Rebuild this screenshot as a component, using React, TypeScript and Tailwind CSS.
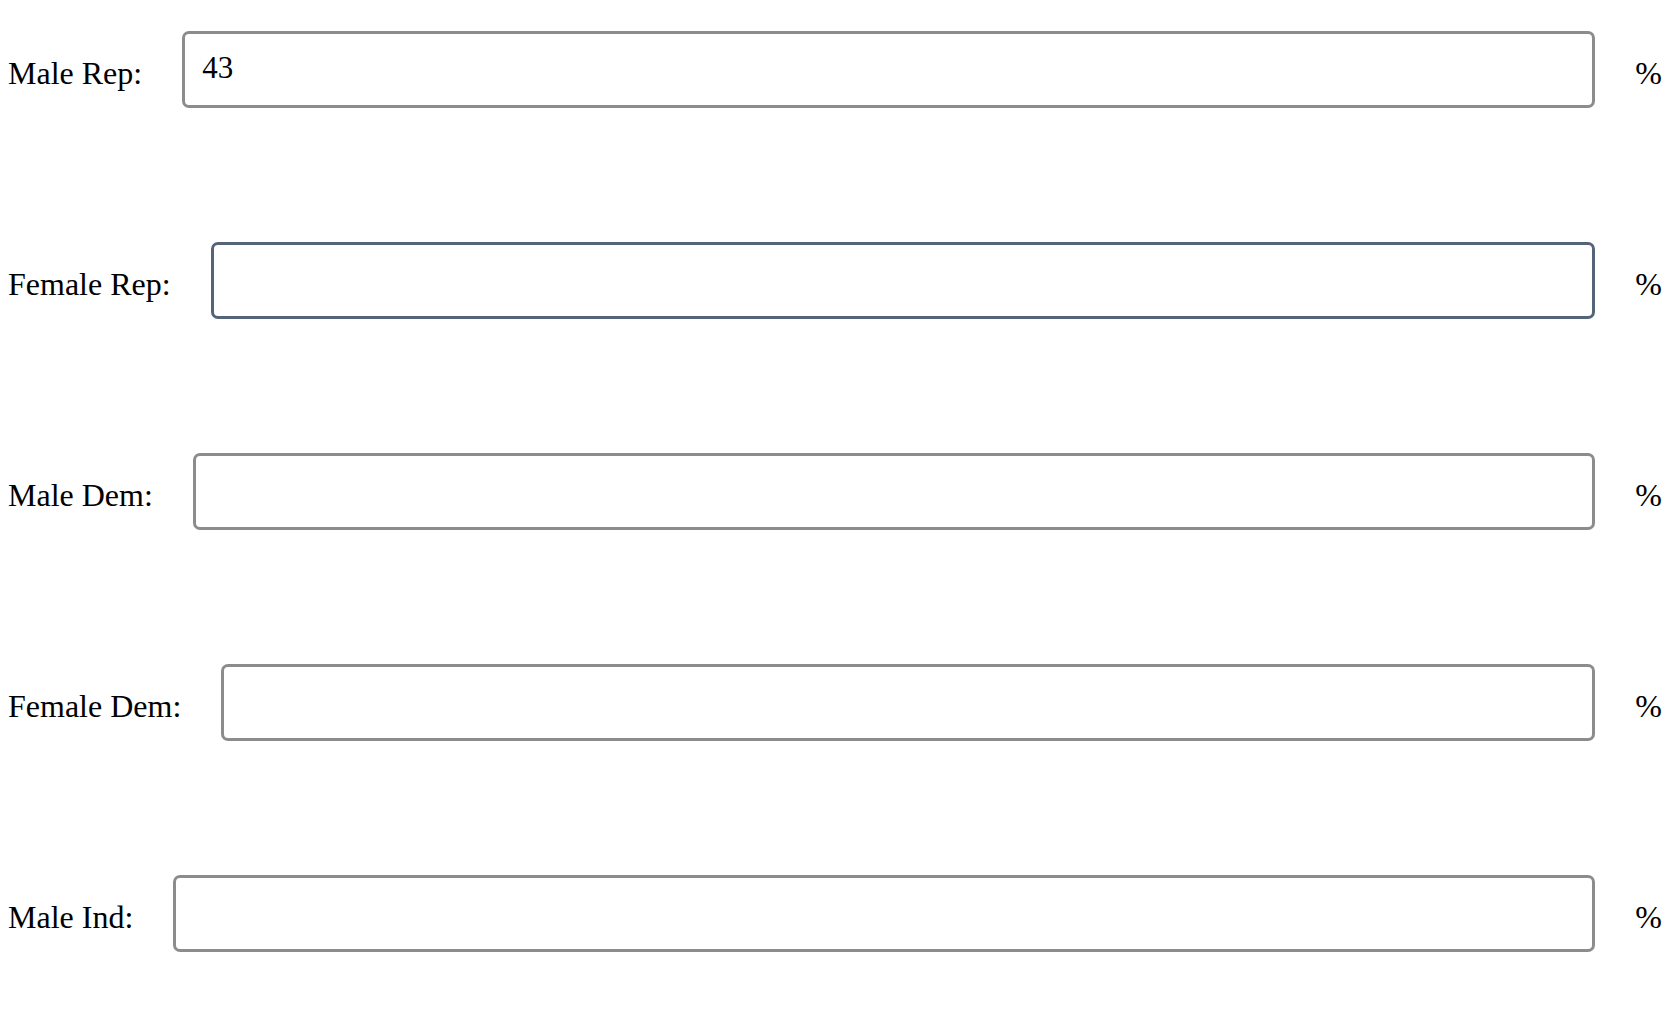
import React, { useState } from 'react';

const FIELDS = ['Male Rep', 'Female Rep', 'Male Dem', 'Female Dem', 'Male Ind'];

export default function App() {
  const [values, setValues] = useState<Record<string, string>>({ 'Male Rep': '43' });

  return (
    <div className="min-h-screen bg-white pl-[8px] pr-[6px] pt-[31px] font-['Liberation_Serif','Times_New_Roman',serif] text-[32px] text-black">
      <div className="flex flex-col gap-[134px]">
        {FIELDS.map((name) => {
          const focused = name === 'Female Rep';
          return (
            <div key={name} className="flex items-center">
              <label className="whitespace-nowrap pt-[6px]">{name}:</label>
              <input
                type="text"
                value={values[name] || ''}
                onChange={(e) => setValues({ ...values, [name]: e.target.value })}
                className={`ml-[40px] mr-[40px] h-[77px] min-w-0 flex-1 rounded-[7px] border-[3px] bg-white px-[17px] pb-[4px] font-['Liberation_Serif','Times_New_Roman',serif] text-[31px] outline-none ${
                  focused ? 'border-[#56647a]' : 'border-[#8c8c8c]'
                }`}
              />
              <span className="pt-[6px]">%</span>
            </div>
          );
        })}
      </div>
    </div>
  );
}
